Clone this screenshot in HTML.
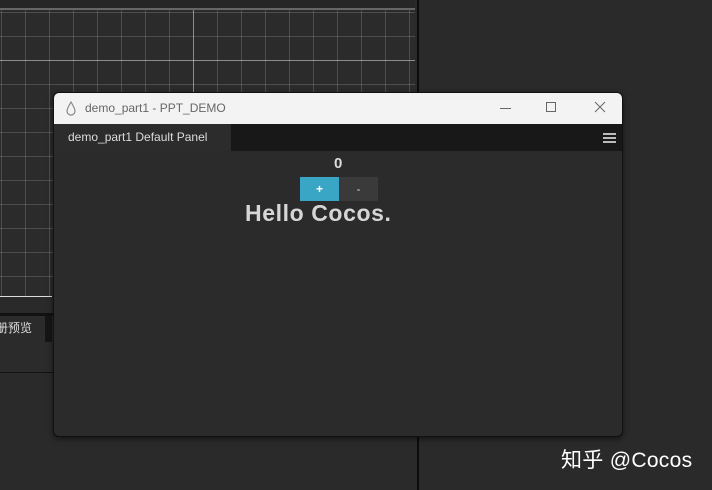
<!DOCTYPE html>
<html><head><meta charset="utf-8"><style>
*{margin:0;padding:0;box-sizing:border-box}
body{width:712px;height:490px;background:#2a2a2a;position:relative;overflow:hidden;font-family:"Liberation Sans","Noto Sans CJK SC",sans-serif}
.grid{position:absolute;left:0;top:0;width:415px;height:297px;background-color:#2b2b2b;
background-image:
linear-gradient(to right, rgba(255,255,255,0.35) 1px, transparent 1px),
linear-gradient(to bottom, rgba(255,255,255,0.35) 1px, transparent 1px),
linear-gradient(to right, rgba(255,255,255,0.16) 1px, transparent 1px),
linear-gradient(to bottom, rgba(255,255,255,0.16) 1px, transparent 1px);
background-size:240px 240px,240px 240px,24px 24px,24px 24px;
background-position:193px 0,0 60px,1px 0,0 12px}
.tb{position:absolute;left:0;top:0;width:415px;height:10px;background:#262626;border-bottom:2px solid #666}
.vline{position:absolute;left:417px;top:0;width:2px;height:490px;background:#0c0c0c}
.gline{position:absolute;left:0;top:296px;width:52px;height:1px;background:#ddd}
.panel{position:absolute;left:0;top:313px;width:53px;height:60px;background:#2b2b2b;border-top:3px solid #111;border-bottom:1px solid #111}
.pmark{position:absolute;left:45px;top:316px;width:7px;height:26px;background:#151515}
.ptab{position:absolute;left:-4px;top:319px;font-size:12px;color:#ddd}
.win{position:absolute;left:53px;top:92px;width:570px;height:345px;background:#2b2b2b;border:1px solid #111;border-radius:6px;overflow:hidden;box-shadow:0 2px 6px rgba(0,0,0,.5)}
.title{height:31px;background:#f3f3f3;position:relative;font-size:12px;color:#666}
.title .t{position:absolute;left:31px;top:8px}
.tabs{height:27px;background:#181818;position:relative}
.tab{position:absolute;left:0;top:0;width:177px;height:27px;background:#2c2c2c;color:#ddd;font-size:12px;padding:6px 0 0 14px}
.num{position:absolute;left:280px;top:62px;color:#ddd;font-weight:bold;font-size:15px}
.bp{position:absolute;left:246px;top:84px;width:39px;height:24px;background:#3aa6c6;color:#fff;font-size:12px;text-align:center;line-height:24px;font-weight:bold}
.bm{position:absolute;left:285px;top:84px;width:39px;height:24px;background:#3a3a3a;color:#ccc;font-size:12px;text-align:center;line-height:24px}
.hello{position:absolute;left:191px;top:107px;color:#d6d6d6;font-weight:bold;font-size:23px;letter-spacing:0.6px}
.wm{position:absolute;left:561px;top:444px;color:#fff;font-size:21px;letter-spacing:0.3px}
</style></head><body>
<div class="grid"></div>
<div class="tb"></div>
<div class="gline"></div>
<div class="panel"></div>
<div class="pmark"></div>
<div class="ptab">册预览</div>
<div class="vline"></div>
<div class="win">
 <div class="title">
  <svg style="position:absolute;left:10px;top:8px" width="14" height="15" viewBox="0 0 14 15"><path d="M7 1 C4 6 3 8 3 10 a4 4 0 0 0 8 0 C11 8 10 6 7 1Z" fill="none" stroke="#888" stroke-width="1.2"/></svg>
  <span class="t">demo_part1 - PPT_DEMO</span>
  <div style="position:absolute;left:446px;top:15px;width:11px;height:1px;background:#666"></div>
  <div style="position:absolute;left:492px;top:9px;width:10px;height:10px;border:1px solid #666"></div>
  <svg style="position:absolute;left:540px;top:8px" width="12" height="12"><path d="M1 1L11 11M11 1L1 11" stroke="#666" stroke-width="1"/></svg>
 </div>
 <div class="tabs"><div class="tab">demo_part1 Default Panel</div>
  <div style="position:absolute;left:549px;top:9px;width:13px;height:10px;border-top:2px solid #bbb;border-bottom:2px solid #bbb"><div style="margin-top:2px;height:2px;background:#bbb"></div></div>
 </div>
 <div class="num">0</div>
 <div class="bp">+</div><div class="bm">-</div>
 <div class="hello">Hello Cocos.</div>
</div>
<div class="wm">知乎 @Cocos</div>
</body></html>
